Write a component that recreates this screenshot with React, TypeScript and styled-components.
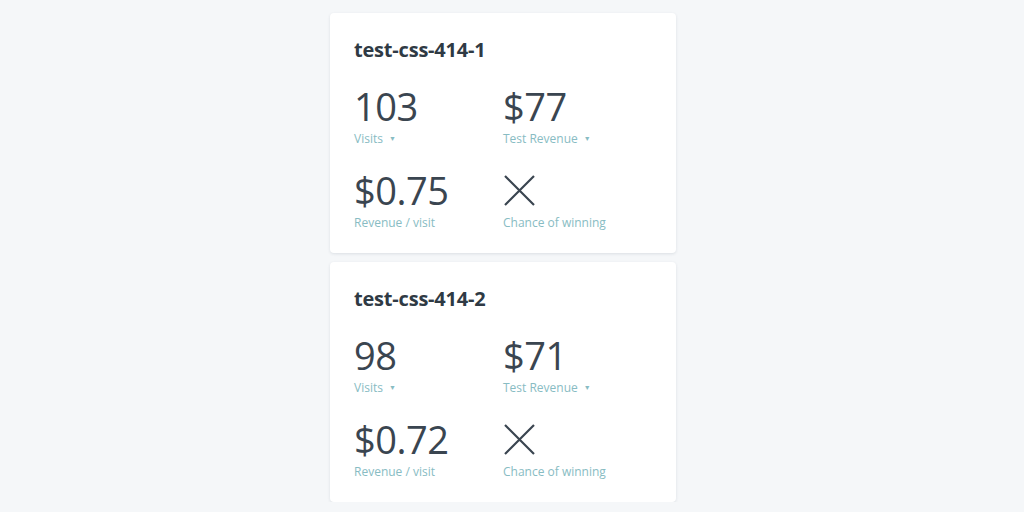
import styled, { createGlobalStyle } from "styled-components";

const GlobalStyle = createGlobalStyle`
  html, body {
    margin: 0;
    padding: 0;
    background: #f5f7f9;
    font-family: "Open Sans", "Noto Sans", sans-serif;
  }
`;

const Page = styled.div`
  display: flex;
  flex-direction: column;
  align-items: center;
  gap: 9px;
  padding: 13px 0 0 0;
  margin-left: -18px;
`;

const Card = styled.div`
  width: 346px;
  height: 240px;
  box-sizing: border-box;
  background: #fff;
  border-radius: 4px;
  box-shadow: 0 1px 3px rgba(40, 60, 80, 0.12);
  padding: 25px 24px 0 24px;
`;

const Title = styled.h2`
  margin: 0;
  font-size: 20px;
  font-weight: 700;
  color: #2f3a44;
  line-height: 24px;
  letter-spacing: -0.2px;
`;

const Grid = styled.div`
  display: grid;
  grid-template-columns: 149px 149px;
  row-gap: 19px;
  margin-top: 20px;
`;

const Stat = styled.div`
  display: flex;
  flex-direction: column;
`;

const Value = styled.div`
  font-size: 38px;
  line-height: 48px;
  color: #3a4550;
  font-weight: 400;
  height: 48px;
  display: flex;
  align-items: center;
  letter-spacing: -0.5px;
`;

const Label = styled.div`
  font-size: 12px;
  color: #88bcc3;
  line-height: 17px;
  display: flex;
  align-items: center;
  gap: 6px;
`;

const Caret = styled.span`
  font-size: 7px;
  line-height: 1;
`;

const Cross = () => (
  <svg width="33" height="33" viewBox="0 0 33 33">
    <path d="M2 2 L31 31 M31 2 L2 31" stroke="#3a4550" strokeWidth="2.2" fill="none" />
  </svg>
);

type Data = { name: string; visits: string; revenue: string; rpv: string };

const tests: Data[] = [
  { name: "test-css-414-1", visits: "103", revenue: "$77", rpv: "$0.75" },
  { name: "test-css-414-2", visits: "98", revenue: "$71", rpv: "$0.72" },
];

export default function App() {
  return (
    <>
      <GlobalStyle />
      <Page>
        {tests.map((t) => (
          <Card key={t.name}>
            <Title>{t.name}</Title>
            <Grid>
              <Stat>
                <Value>{t.visits}</Value>
                <Label>
                  Visits <Caret>▼</Caret>
                </Label>
              </Stat>
              <Stat>
                <Value>{t.revenue}</Value>
                <Label>
                  Test Revenue <Caret>▼</Caret>
                </Label>
              </Stat>
              <Stat>
                <Value>{t.rpv}</Value>
                <Label>Revenue / visit</Label>
              </Stat>
              <Stat>
                <Value>
                  <Cross />
                </Value>
                <Label>Chance of winning</Label>
              </Stat>
            </Grid>
          </Card>
        ))}
      </Page>
    </>
  );
}
